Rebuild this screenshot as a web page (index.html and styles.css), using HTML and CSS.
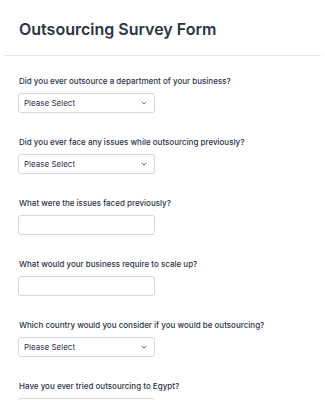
FILE: index.html
```html
<!DOCTYPE html>
<html>
<head>
<meta charset="utf-8">
<link rel="stylesheet" href="styles.css">
</head>
<body>
<div class="page">
  <header class="header">
    <h1 class="title">Outsourcing Survey Form</h1>
  </header>
  <div class="divider"></div>
  <form class="form">
    <div class="question">
      <label class="label">Did you ever outsource a department of your business?</label>
      <div class="select"><span>Please Select</span><svg class="chev" viewBox="0 0 8 5" width="6" height="4"><path d="M1 1l3 3 3-3" fill="none" stroke="#5b6275" stroke-width="1.3"/></svg></div>
    </div>
    <div class="question">
      <label class="label">Did you ever face any issues while outsourcing previously?</label>
      <div class="select"><span>Please Select</span><svg class="chev" viewBox="0 0 8 5" width="6" height="4"><path d="M1 1l3 3 3-3" fill="none" stroke="#5b6275" stroke-width="1.3"/></svg></div>
    </div>
    <div class="question">
      <label class="label">What were the issues faced previously?</label>
      <div class="input"></div>
    </div>
    <div class="question">
      <label class="label">What would your business require to scale up?</label>
      <div class="input"></div>
    </div>
    <div class="question">
      <label class="label">Which country would you consider if you would be outsourcing?</label>
      <div class="select"><span>Please Select</span><svg class="chev" viewBox="0 0 8 5" width="6" height="4"><path d="M1 1l3 3 3-3" fill="none" stroke="#5b6275" stroke-width="1.3"/></svg></div>
    </div>
    <div class="question">
      <label class="label">Have you ever tried outsourcing to Egypt?</label>
      <div class="select"></div>
    </div>
  </form>
</div>
</body>
</html>
```
FILE: styles.css
```css
html, body {
  margin: 0;
  padding: 0;
  background: #ffffff;
}
body {
  font-family: Inter, "Noto Sans", sans-serif;
  color: #2c3345;
  overflow: hidden;
  height: 400px;
}
.header {
  padding: 18px 19px 0;
}
.title {
  margin: 0;
  font-size: 16px;
  line-height: 22px;
  font-weight: 600;
  color: #2c3345;
}
.divider {
  margin: 15px 4px 0;
  height: 1px;
  background: #e3e5ea;
}
.form {
  padding: 19px 18px 0;
  display: flex;
  flex-direction: column;
  gap: 23px;
}
.question {
  display: flex;
  flex-direction: column;
  gap: 6px;
}
.label {
  font-size: 8px;
  line-height: 12px;
  font-weight: 500;
  padding-left: 1px;
}
.select, .input {
  width: 137px;
  height: 20px;
  box-sizing: border-box;
  border: 1px solid #d3d8e1;
  border-radius: 3px;
  background: #fff;
}
.select {
  display: flex;
  align-items: center;
  justify-content: space-between;
  padding: 0 7px 0 5px;
  font-size: 8px;
}
.chev {
  display: block;
}
```
